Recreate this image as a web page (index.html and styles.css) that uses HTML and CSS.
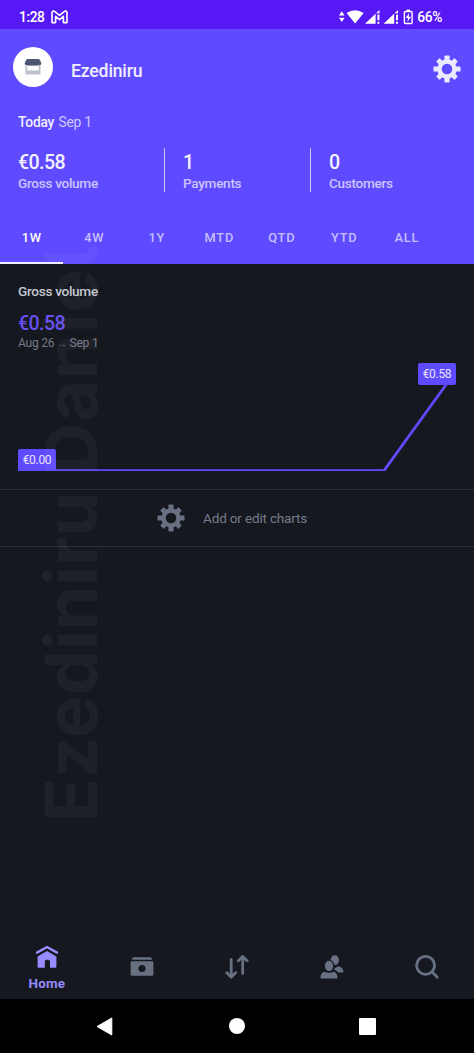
FILE: index.html
```
<!DOCTYPE html>
<html lang="en">
<head>
  <meta charset="UTF-8">
  <meta name="viewport" content="width=device-width, initial-scale=1.0">
  <title>Home</title>
  <link rel="stylesheet" href="styles.css">
</head>
<body>
  <svg width="0" height="0" class="defs">
    <symbol id="gear" viewBox="-14 -14 28 28">
      <g fill="currentColor">
        <g id="teeth">
          <rect x="-2.6" y="-13.5" width="5.2" height="6" rx="0.7"/>
          <rect x="-2.6" y="7.5" width="5.2" height="6" rx="0.7"/>
          <rect x="-13.5" y="-2.6" width="6" height="5.2" rx="0.7"/>
          <rect x="7.5" y="-2.6" width="6" height="5.2" rx="0.7"/>
        </g>
        <use href="#teeth" transform="rotate(45) scale(0.96)"/>
      </g>
      <circle r="7.5" fill="none" stroke="currentColor" stroke-width="4.4"/>
    </symbol>
  </svg>

  <div class="app">
    <div class="status-bar">
      <span class="time">1:28</span>
      <svg class="mail" width="17" height="14" viewBox="0 0 17 14" fill="none" stroke="#fff" stroke-width="1.6" stroke-linejoin="round">
        <path d="M1 2.6Q1.6 .6 3.2 1.2L8.5 5.4L13.8 1.2Q15.6 .6 16 2.6V12.6H12.4V6.4L8.5 9.6L4.6 6.4V12.6H1Z"/>
      </svg>
      <svg class="signals" width="76" height="16" viewBox="0 0 76 16" fill="#fff">
        <path d="M0 6.5L2.8 2.2L5.6 6.5ZM0 8.8H5.6L2.8 13.1Z"/>
        <path d="M7.6 4Q16 -1.6 24.6 4L16.1 14.6Z"/>
        <path d="M26 14.8L40.5 1V4.2H36.6V14.8Z"/>
        <path d="M38.4 5.4h2v5.8h-2zM38.4 12.8h2v2h-2z"/>
        <path d="M44.6 14.8L59 1V4.2H55.2V14.8Z"/>
        <path d="M57 5.4h2v5.8h-2zM57 12.8h2v2h-2z"/>
        <path d="M67.6 .6h3.4v1.8h-3.4z"/>
        <rect x="65.4" y="2.5" width="7.7" height="12" rx="1" fill="none" stroke="#fff" stroke-width="1.4"/>
        <path d="M70.2 4L66.7 9H69L68.5 13L72 7.8H69.7Z"/>
      </svg>
      <span class="battery">66%</span>
    </div>

    <header class="header">
      <div class="account">
        <div class="avatar">
          <svg width="18" height="18" viewBox="0 0 18 18">
            <path d="M1.5 7.5V16.5H16.5V7.5H14.7V12.6H3.3V7.5Z" fill="#bcc1cc"/>
            <path d="M3 1H15Q16.8 3 17.4 5.6Q16.8 7.8 14.8 7Q13.4 8.4 11.8 7.2Q10.4 8.4 9 7.2Q7.6 8.4 6.2 7.2Q4.6 8.4 3.2 7Q1.2 7.8 .6 5.6Q1.2 3 3 1Z" fill="#4c5673"/>
          </svg>
        </div>
        <div class="account-name">Ezediniru</div>
        <svg class="settings" width="28" height="28"><use href="#gear"/></svg>
      </div>

      <div class="today"><b>Today</b> <span>Sep 1</span></div>

      <div class="stats">
        <div class="stat">
          <div class="stat-value">€0.58</div>
          <div class="stat-label">Gross volume</div>
        </div>
        <div class="stat">
          <div class="stat-value">1</div>
          <div class="stat-label">Payments</div>
        </div>
        <div class="stat">
          <div class="stat-value">0</div>
          <div class="stat-label">Customers</div>
        </div>
      </div>

      <div class="tabs">
        <div class="tab active">1W</div>
        <div class="tab">4W</div>
        <div class="tab">1Y</div>
        <div class="tab">MTD</div>
        <div class="tab">QTD</div>
        <div class="tab">YTD</div>
        <div class="tab">ALL</div>
      </div>
    </header>

    <main class="content">
      <section class="chart-card">
        <div class="chart-title">Gross volume</div>
        <div class="chart-value">€0.58</div>
        <div class="chart-range">Aug 26 <span class="range-arrow">→</span> Sep 1</div>
        <div class="chart">
          <svg width="438" height="108" viewBox="0 0 438 108" fill="none" stroke="#5f4bfc" stroke-width="2.8">
            <path d="M0 107.6H366L430 19"/>
          </svg>
          <span class="chart-badge start">€0.00</span>
          <span class="chart-badge end">€0.58</span>
        </div>
      </section>
      <div class="edit-charts">
        <svg width="28" height="28"><use href="#gear"/></svg>
        <span>Add or edit charts</span>
      </div>
    </main>

    <nav class="tab-bar">
      <div class="tab-item active">
        <svg width="24" height="24" viewBox="0 0 24 24">
          <path d="M2 7.6L12 2L22 7.6" fill="none" stroke="currentColor" stroke-width="2.4" stroke-linecap="round" stroke-linejoin="round"/>
          <path d="M12 6L21.4 11.4V21.8Q21.4 22.8 20.4 22.8H15V16.4Q15 14.8 13.4 14.8H11.4Q9.8 14.8 9.8 16.4V22.8H3.6Q2.6 22.8 2.6 21.8V11.4Z" fill="currentColor"/>
        </svg>
        <span>Home</span>
      </div>
      <div class="tab-item">
        <svg width="24" height="24" viewBox="0 0 24 24" fill="currentColor">
          <path d="M3.6 2.2H20.4Q22 2.2 22 4.8H2Q2 2.2 3.6 2.2Z"/>
          <path fill-rule="evenodd" d="M2 6.2H22Q23.4 6.2 23.4 7.6V19.4Q23.4 20.8 22 20.8H2Q.6 20.8 .6 19.4V7.6Q.6 6.2 2 6.2ZM12 9.9A3.6 3.6 0 1 0 12 17.1A3.6 3.6 0 1 0 12 9.9Z"/>
        </svg>
      </div>
      <div class="tab-item">
        <svg width="24" height="24" viewBox="0 0 24 24" fill="none" stroke="currentColor" stroke-width="2.8" stroke-linecap="round" stroke-linejoin="round">
          <path d="M6.2 4.4V22M1.8 17.8L6.2 22.2L10.6 17.8M17.7 18.4V2M13.3 5.8L17.7 1.4L22.1 5.8"/>
        </svg>
      </div>
      <div class="tab-item">
        <svg width="24" height="24" viewBox="0 0 24 24" fill="currentColor">
          <ellipse cx="14.8" cy="5.2" rx="4.2" ry="4.9"/>
          <path d="M14 14.6Q15 11.8 18.6 11.2Q22.8 12 23.4 16.4Q23.4 17.6 22.4 17.6H18Q16.6 15.6 14 14.6Z"/>
          <ellipse cx="9" cy="11" rx="4.7" ry="5.7" stroke="#15181e" stroke-width="1.1"/>
          <path d="M.4 22.4Q.8 17.8 4.2 16.8Q9 18.8 13.8 16.8Q17.2 17.8 17.6 22.4Q17.6 23.4 16.8 23.4H1.2Q.4 23.4 .4 22.4Z"/>
        </svg>
      </div>
      <div class="tab-item">
        <svg width="24" height="24" viewBox="0 0 24 24" fill="none" stroke="currentColor" stroke-width="2.8" stroke-linecap="round">
          <circle cx="10.6" cy="10.4" r="9"/>
          <path d="M17.2 17L22.2 22.2"/>
        </svg>
      </div>
    </nav>

    <div class="system-nav">
      <svg width="17" height="19" viewBox="0 0 17 19"><path d="M15.8 1V18L1 9.5Z" fill="#fff" stroke="#fff" stroke-linejoin="round"/></svg>
      <div class="sys-home"></div>
      <div class="sys-recent"></div>
    </div>

    <div class="watermark">Ezediniru <span>Danie<i>l</i></span></div>
  </div>
</body>
</html>
```
FILE: styles.css
```
* {
  box-sizing: border-box;
}

body {
  margin: 0;
  font-family: Roboto, 'Liberation Sans', sans-serif;
  background-color: #15181e;
  color: #fff;
}

svg {
  display: block;
  flex-shrink: 0;
}

.defs {
  position: absolute;
}

.app {
  position: relative;
  display: flex;
  flex-direction: column;
  width: 474px;
  height: 1053px;
  overflow: hidden;
}

/* Status bar */
.status-bar {
  display: flex;
  align-items: center;
  height: 29px;
  padding: 4px 32px 0 19px;
  background-color: #5619f6;
  font-size: 13.8px;
  font-weight: 500;
  letter-spacing: -0.4px;
}

.mail {
  margin-left: 6px;
}

.signals {
  margin-left: auto;
  margin-right: 2px;
}

/* Header */
.header {
  display: flex;
  flex-direction: column;
  height: 235px;
  background-color: #5f4bff;
}

.account {
  display: flex;
  align-items: center;
  height: 76px;
  padding: 0 13px;
}

.avatar {
  display: flex;
  align-items: center;
  justify-content: center;
  width: 40px;
  height: 40px;
  border-radius: 50%;
  background-color: #fff;
}

.account-name {
  margin-left: 18px;
  padding-top: 8px;
  font-size: 17.6px;
  font-weight: 500;
  letter-spacing: -0.15px;
  color: #f1eeff;
}

.settings {
  margin: 4px 0 0 auto;
  color: #eceaff;
}

.today {
  padding: 9px 18px 0;
  font-size: 13.8px;
  line-height: 17px;
  letter-spacing: -0.2px;
  color: #d0c9ff;
}

.today b {
  font-weight: 500;
  color: #f1eeff;
}

.today span {
  margin-left: 1px;
}

.stats {
  display: flex;
  margin-top: 17px;
  padding-left: 18px;
}

.stat {
  width: 146px;
  height: 44px;
  padding-top: 4px;
}

.stat + .stat {
  padding-left: 18px;
  border-left: 1px solid #cfc9ff;
}

.stat:last-child {
  width: 160px;
}

.stat-value {
  font-size: 19.6px;
  font-weight: 500;
  line-height: 22px;
  letter-spacing: -0.6px;
  color: #f4f1ff;
}

.stat-label {
  margin-top: 1px;
  font-size: 13.6px;
  font-weight: 500;
  line-height: 17px;
  letter-spacing: -0.3px;
  color: #cbc4ff;
}

.tabs {
  display: flex;
  height: 54px;
  margin-top: auto;
}

.tab {
  width: 62.5px;
  padding-left: 1px;
  line-height: 56px;
  text-align: center;
  font-size: 12.8px;
  font-weight: 500;
  letter-spacing: 0.8px;
  color: #c6bfff;
}

.tab.active {
  color: #fff;
  border-bottom: 2px solid #f1eeff;
}

/* Chart */
.content {
  flex: 1;
}

.chart-card {
  height: 226px;
  padding: 19px 18px 0;
  border-bottom: 1px solid #2d3037;
}

.chart-title {
  font-size: 13.6px;
  font-weight: 500;
  line-height: 17px;
  letter-spacing: -0.3px;
  color: #c3c7d2;
}

.chart-value {
  margin-top: 13px;
  font-size: 19.6px;
  font-weight: 500;
  line-height: 22px;
  letter-spacing: -0.6px;
  color: #674ff0;
}

.chart-range {
  margin-top: 1px;
  font-size: 12px;
  line-height: 15px;
  letter-spacing: -0.22px;
  color: #747985;
}

.range-arrow {
  font-size: 10px;
}

.chart {
  position: relative;
  height: 108px;
  margin-top: 12px;
}

.chart-badge {
  position: absolute;
  width: 38px;
  height: 22px;
  border-radius: 2px;
  background-color: #5f4bff;
  text-align: center;
  font-size: 12px;
  line-height: 22px;
  letter-spacing: -0.3px;
  color: #e8e4ff;
}

.chart-badge.start {
  left: 0;
  bottom: 0;
}

.chart-badge.end {
  right: 0;
  top: 0;
}

.edit-charts {
  display: flex;
  align-items: center;
  gap: 18px;
  height: 57px;
  padding-left: 157px;
  border-bottom: 1px solid #2d3037;
  font-size: 13.6px;
  letter-spacing: -0.2px;
  color: #747c8c;
}

.edit-charts svg {
  color: #687082;
}

/* Bottom navigation */
.tab-bar {
  display: flex;
  height: 63px;
  color: #687182;
}

.tab-item {
  display: flex;
  flex: 1;
  flex-direction: column;
  align-items: center;
  padding-top: 19px;
}

.tab-item.active {
  padding-top: 9px;
  color: #968bff;
  font-size: 13.4px;
  font-weight: 700;
  letter-spacing: 0.2px;
}

.tab-item span {
  margin: 6px 1px 0 0;
  line-height: 17px;
}

.system-nav {
  display: flex;
  align-items: center;
  height: 54px;
  padding-left: 96px;
  background-color: #000;
}

.sys-home {
  width: 16px;
  height: 16px;
  margin-left: 116px;
  border-radius: 50%;
  background-color: #fff;
}

.sys-recent {
  width: 17px;
  height: 17px;
  margin-left: 114px;
  border-radius: 1px;
  background-color: #fff;
}

/* Name running up the screen, over everything else */
.watermark {
  position: absolute;
  left: 27px;
  bottom: 231px;
  writing-mode: vertical-rl;
  transform: rotate(180deg);
  font-family: Inter, 'Liberation Sans', sans-serif;
  font-size: 72px;
  font-weight: 700;
  line-height: 88px;
  white-space: nowrap;
  color: rgba(220, 225, 255, 0.05);
  pointer-events: none;
}

.watermark span {
  letter-spacing: 1.1px;
}

/* l with a tail */
.watermark i {
  font-style: normal;
  font-feature-settings: 'cv05', 'ss02';
}
```
